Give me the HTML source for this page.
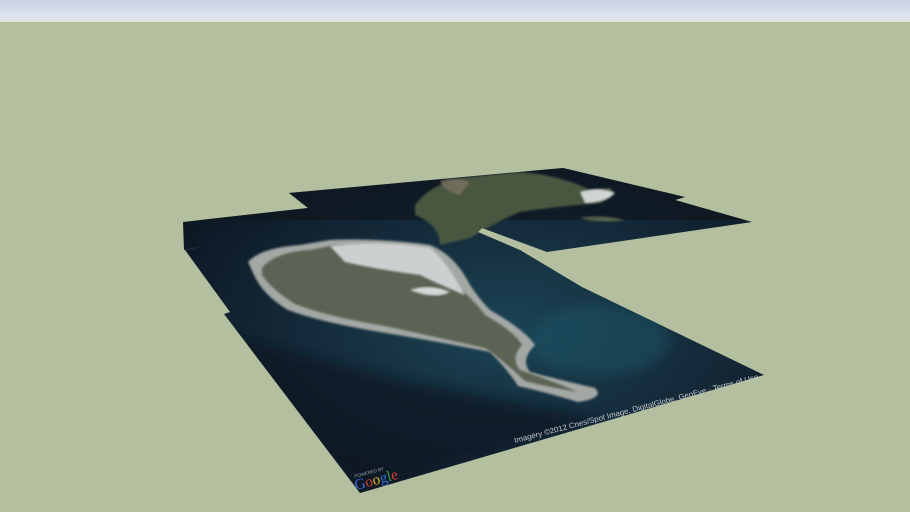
<!DOCTYPE html>
<html><head><meta charset="utf-8"><style>
html,body{margin:0;padding:0;width:910px;height:512px;overflow:hidden;background:#b3bf9f}
svg{display:block}
</style></head><body>
<svg width="910" height="512" viewBox="0 0 910 512" xmlns="http://www.w3.org/2000/svg">
<defs>
<linearGradient id="sky" x1="0" y1="0" x2="0" y2="1">
<stop offset="0" stop-color="#c7d1e2"/><stop offset="1" stop-color="#e3e7f1"/></linearGradient>
<radialGradient id="sea" cx="0.55" cy="0.5" r="0.6">
<stop offset="0" stop-color="#1b4455"/><stop offset="0.6" stop-color="#142838"/><stop offset="1" stop-color="#0d1724"/></radialGradient>
<filter id="b1"><feGaussianBlur stdDeviation="1"/></filter>
<filter id="b2"><feGaussianBlur stdDeviation="2"/></filter>
<filter id="b5"><feGaussianBlur stdDeviation="6"/></filter>
<clipPath id="cp"><path d="M289,193 L563,168 L685,197 L675,200 L752,222 L547,252 L482,228 L478,232 L520,250 L582,287 L764,375 L360,493 L224,314 L230,312 L185,250 L205,246 L184,250 L183,222 L308,208 Z"/></clipPath>
</defs>
<rect x="0" y="0" width="910" height="20" fill="url(#sky)"/>
<rect x="0" y="20" width="910" height="2" fill="#dfe3d6"/>
<rect x="0" y="22" width="910" height="490" fill="#b3bf9f"/>
<g clip-path="url(#cp)">
<rect x="170" y="160" width="610" height="340" fill="url(#sea)"/>
<rect x="170" y="160" width="610" height="60" fill="#0e1822" opacity="0.8"/>
<path d="M200,330 L360,493 L600,420 L400,380 Z" fill="#0c1623" opacity="0.7" filter="url(#b5)"/>
<ellipse cx="600" cy="340" rx="70" ry="35" fill="#1f5566" opacity="0.5" filter="url(#b5)"/>
<!-- northern land -->
<path d="M415,205 Q430,185 460,178 L520,172 Q560,175 590,190 L610,188 Q618,195 600,203 Q560,206 520,212 Q500,220 470,238 L440,245 Q440,225 415,215 Z" fill="#4a5640" filter="url(#b1)"/>
<path d="M580,192 Q600,186 615,193 Q605,203 585,203 Z" fill="#d0d4d4" filter="url(#b1)"/>
<path d="M440,181 Q455,176 470,182 L460,195 Q445,192 440,181Z" fill="#7a7262" opacity="0.8" filter="url(#b1)"/>
<path d="M580,218 Q600,214 625,220 Q600,224 580,218Z" fill="#55604a" filter="url(#b1)"/>
<!-- main island -->
<path d="M248,262 Q260,248 300,245 L330,240 Q380,238 430,245 Q455,255 470,285 Q480,300 490,310 Q525,330 535,345 Q520,360 530,372 Q560,380 595,388 Q605,398 578,402 Q545,392 518,386 Q508,370 490,352 Q440,342 380,332 Q320,322 288,310 Q263,295 254,275 Z" fill="#a4a8a4" filter="url(#b1)"/>
<path d="M262,268 Q275,252 310,250 L330,246 Q380,244 425,250 Q445,262 462,290 Q478,305 485,315 Q515,332 522,345 Q510,358 520,370 Q550,380 578,392 Q548,387 525,381 Q505,362 485,348 Q440,338 385,326 Q325,316 295,304 Q272,290 262,275 Z" fill="#5b6354" filter="url(#b1)"/>
<path d="M330,246 Q380,240 430,248 Q450,265 465,295 Q440,285 420,275 Q380,270 345,262 Z" fill="#cdd0d0" filter="url(#b1)"/>
<path d="M410,290 Q430,283 450,292 Q435,300 410,290Z" fill="#d4d7d7" filter="url(#b1)"/>
</g>
<text x="0" y="0" transform="translate(515,443) rotate(-14.7)" font-family="Liberation Sans, sans-serif" font-size="7.6" fill="#c3c8cc" textLength="252" lengthAdjust="spacingAndGlyphs">Imagery ©2012 Cnes/Spot Image, DigitalGlobe, GeoEye · Terms of Use</text>
<g transform="translate(356,490) rotate(-15)" font-family="Liberation Serif, serif">
<text x="2" y="-12" font-size="4.5" fill="#9aa0a8" font-family="Liberation Sans, sans-serif">POWERED BY</text>
<text x="0" y="0" font-size="15"><tspan fill="#3a6cd8">G</tspan><tspan fill="#d8402c">o</tspan><tspan fill="#e6b820">o</tspan><tspan fill="#3a6cd8">g</tspan><tspan fill="#3aa048">l</tspan><tspan fill="#d8402c">e</tspan></text>
</g>
</svg>
</body></html>
